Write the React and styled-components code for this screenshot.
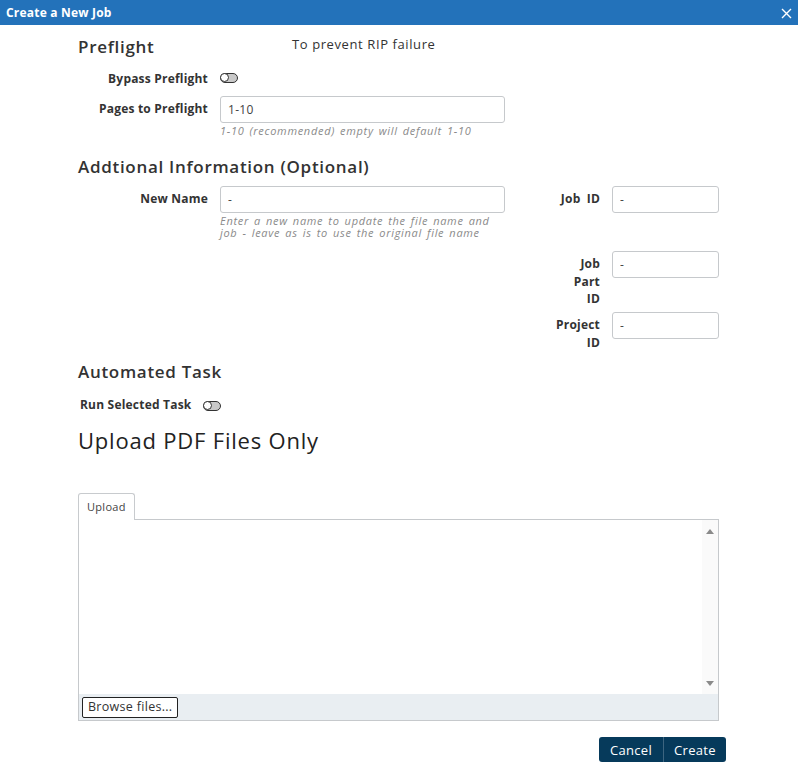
import React from "react";
import styled, { createGlobalStyle } from "styled-components";

const GlobalStyle = createGlobalStyle`
  html, body {
    margin: 0;
    padding: 0;
    background: #fff;
    font-family: "Open Sans", "Liberation Sans", sans-serif;
    color: #333;
  }
  * { box-sizing: border-box; }
`;

export default function App() {
  return (
    <>
      <GlobalStyle />
      <Dialog>
        <TitleBar>
          <span>Create a New Job</span>
          <CloseButton aria-label="close">
            <svg width="11" height="11" viewBox="0 0 11 11">
              <path d="M1 1L10 10M10 1L1 10" stroke="#fff" strokeWidth="1.4" />
            </svg>
          </CloseButton>
        </TitleBar>

        <Body>
          <SectionHead>
            <Heading>Preflight</Heading>
            <Note>To prevent RIP failure</Note>
          </SectionHead>

          <FieldRow $gap={12}>
            <Label>Bypass Preflight</Label>
            <Toggle />
          </FieldRow>
          <FieldRow>
            <Label $pad>Pages to Preflight</Label>
            <div>
              <Input defaultValue="1-10" />
              <Help>1-10 (recommended) empty will default 1-10</Help>
            </div>
          </FieldRow>

          <Heading $top={18}>Addtional Information (Optional)</Heading>

          <InfoGrid>
            <FieldRow $gap={0}>
              <Label $pad>New Name</Label>
              <div>
                <Input defaultValue="-" />
                <Help>
                  Enter a new name to update the file name and job - leave as
                  is to use the original file name
                </Help>
              </div>
            </FieldRow>

            <SideFields>
              <SideRow $h={65}>
                <SideLabel>Job ID</SideLabel>
                <Input defaultValue="-" />
              </SideRow>
              <SideRow $h={61}>
                <SideLabel>Job Part ID</SideLabel>
                <Input defaultValue="-" />
              </SideRow>
              <SideRow>
                <SideLabel>Project ID</SideLabel>
                <Input defaultValue="-" />
              </SideRow>
            </SideFields>
          </InfoGrid>

          <Heading $top={9}>Automated Task</Heading>
          <TaskRow>
            <TaskLabel>Run Selected Task</TaskLabel>
            <Toggle />
          </TaskRow>

          <UploadTitle>Upload PDF Files Only</UploadTitle>

          <Tab>Upload</Tab>
          <Panel>
            <DropArea>
              <ScrollBar>
                <Arrow $up />
                <Arrow />
              </ScrollBar>
            </DropArea>
            <PanelFooter>
              <BrowseButton>Browse files...</BrowseButton>
            </PanelFooter>
          </Panel>
        </Body>

        <Footer>
          <ActionButton $left>Cancel</ActionButton>
          <ActionButton>Create</ActionButton>
        </Footer>
      </Dialog>
    </>
  );
}

const Dialog = styled.div`
  width: 798px;
  height: 770px;
  background: #fff;
`;

const TitleBar = styled.div`
  height: 25px;
  background: #2372ba;
  color: #fff;
  font-weight: 700;
  font-size: 12px;
  letter-spacing: 0.2px;
  display: flex;
  align-items: center;
  justify-content: space-between;
  padding: 0 6px;
`;

const CloseButton = styled.button`
  border: 0;
  background: transparent;
  padding: 0;
  display: flex;
  margin-top: 2px;
`;

const Body = styled.div`
  padding: 10px 79px 0 78px;
`;

const SectionHead = styled.div`
  display: grid;
  grid-template-columns: 214px 1fr;
  align-items: start;
`;

const Heading = styled.h2`
  margin: ${({ $top }) => $top || 0}px 0 0;
  font-size: 17px;
  font-weight: 600;
  letter-spacing: 0.7px;
  color: #333;
  line-height: 24px;
`;

const Note = styled.div`
  font-size: 13px;
  line-height: 16px;
  letter-spacing: 0.6px;
  margin-top: 1px;
`;

const FieldRow = styled.div`
  display: grid;
  grid-template-columns: 130px 285px;
  column-gap: 12px;
  align-items: start;
  margin-top: ${({ $gap }) => ($gap === undefined ? 9 : $gap)}px;
`;

const Label = styled.div`
  text-align: right;
  font-size: 12px;
  font-weight: 700;
  line-height: 16px;
  letter-spacing: 0.2px;
  padding-top: ${({ $pad }) => ($pad ? 5 : 0)}px;
`;

const Input = styled.input`
  width: 100%;
  height: 27px;
  border: 1px solid #c6c9cc;
  border-radius: 3px;
  padding: 0 7px;
  font-family: inherit;
  font-size: 12px;
  letter-spacing: 0.3px;
  color: #444;
  outline: none;
`;

const Help = styled.div`
  font-size: 11px;
  font-style: italic;
  color: #8a8a8a;
  line-height: 12px;
  letter-spacing: 0.7px;
  word-spacing: 1.5px;
  margin-top: 2px;
`;

const InfoGrid = styled.div`
  display: grid;
  grid-template-columns: 427px 1fr;
  margin-top: 7px;
`;

const SideFields = styled.div`
  display: flex;
  flex-direction: column;
  align-items: flex-end;
`;

const SideRow = styled.div`
  display: grid;
  grid-template-columns: 45px 107px;
  column-gap: 12px;
  align-items: start;
  height: ${({ $h }) => ($h ? `${$h}px` : "auto")};
`;

const SideLabel = styled.div`
  text-align: right;
  font-size: 12px;
  font-weight: 700;
  line-height: 17.5px;
  letter-spacing: 0.2px;
  word-spacing: 3px;
  padding-top: 4px;
`;

const TaskRow = styled.div`
  display: flex;
  align-items: center;
  gap: 12px;
  padding-left: 2px;
  margin-top: 12px;
`;

const TaskLabel = styled.div`
  font-size: 12px;
  font-weight: 700;
  letter-spacing: 0.2px;
`;

const Toggle = styled.span`
  position: relative;
  display: inline-block;
  width: 18px;
  height: 10px;
  border: 1.5px solid #333;
  border-radius: 6px;
  background: #c9c9c9;
  margin-top: 2px;
  &::before {
    content: "";
    position: absolute;
    left: -1px;
    top: -1px;
    width: 9px;
    height: 9px;
    border-radius: 50%;
    background: #fff;
    border: 1.5px solid #333;
    box-sizing: border-box;
  }
`;

const UploadTitle = styled.h1`
  margin: 13px 0 0;
  font-size: 22px;
  font-weight: 500;
  line-height: 28px;
  letter-spacing: 0.8px;
  color: #222;
`;

const Tab = styled.div`
  display: inline-block;
  margin-top: 38px;
  height: 27px;
  padding: 0 8px;
  border: 1px solid #c8cbce;
  border-bottom: 0;
  border-radius: 3px 3px 0 0;
  font-size: 11px;
  line-height: 26px;
  letter-spacing: 0.3px;
  color: #444;
  position: relative;
  top: 1px;
  background: #fff;
`;

const Panel = styled.div`
  border: 1px solid #c6c9cc;
  height: 202px;
  display: flex;
  flex-direction: column;
`;

const DropArea = styled.div`
  flex: 1;
  display: flex;
  justify-content: flex-end;
`;

const ScrollBar = styled.div`
  width: 16px;
  background: #fafafa;
  display: flex;
  flex-direction: column;
  justify-content: space-between;
  align-items: center;
  padding: 9px 0 8px;
`;

const Arrow = styled.span`
  width: 0;
  height: 0;
  border-left: 4px solid transparent;
  border-right: 4px solid transparent;
  ${({ $up }) =>
    $up ? "border-bottom: 5px solid #8a8a8a;" : "border-top: 5px solid #8a8a8a;"}
`;

const PanelFooter = styled.div`
  height: 26px;
  background: #e9eef2;
  display: flex;
  align-items: center;
  padding-left: 3px;
`;

const BrowseButton = styled.button`
  height: 21px;
  padding: 0 5px;
  background: #fff;
  border: 1px solid #222;
  border-radius: 2px;
  font-family: inherit;
  font-size: 12.5px;
  letter-spacing: 0.3px;
  color: #333;
  line-height: 18px;
`;

const Footer = styled.div`
  display: flex;
  justify-content: flex-end;
  padding-right: 72px;
  margin-top: 16px;
`;

const ActionButton = styled.button`
  height: 25px;
  width: ${({ $left }) => ($left ? 64 : 63)}px;
  background: #063a5b;
  color: #fff;
  border: 0;
  border-radius: ${({ $left }) => ($left ? "3px 0 0 3px" : "0 3px 3px 0")};
  border-left: ${({ $left }) => ($left ? "0" : "1px solid #3d6580")};
  font-family: inherit;
  font-size: 13px;
  letter-spacing: 0.3px;
`;
